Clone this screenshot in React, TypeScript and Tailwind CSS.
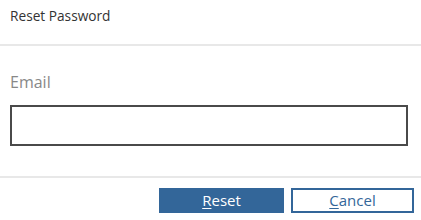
export default function App() {
  return (
    <div className="w-[421px] h-[220px] bg-white flex flex-col" style={{ fontFamily: '"Open Sans", "Noto Sans", sans-serif' }}>
      <div className="h-[46px] border-b-2 border-[#e8e8e8] px-[10px] pt-[6px]">
        <div className="text-[13.7px] leading-[20px] text-[#333333]">Reset Password</div>
      </div>
      <div className="h-[130px] px-[10px] pt-[25px] flex flex-col">
        <div className="text-[16px] leading-[22px] text-[#888888]">Email</div>
        <input type="text" className="mt-[12px] w-[398px] h-[41px] border-2 border-[#4a4a4a] bg-white outline-none" />
      </div>
      <div className="flex-1 border-t-2 border-[#e8e8e8] flex justify-end gap-[7px] pt-[10px] pr-[7px]">
        <button className="w-[125px] h-[25px] bg-[#336699] text-white text-[15px] leading-[25px]">
          <span className="underline underline-offset-2">R</span>eset
        </button>
        <button className="w-[123px] h-[25px] bg-white border-2 border-[#336699] text-[#336699] text-[15px] leading-[21px]">
          <span className="underline underline-offset-2">C</span>ancel
        </button>
      </div>
    </div>
  );
}
